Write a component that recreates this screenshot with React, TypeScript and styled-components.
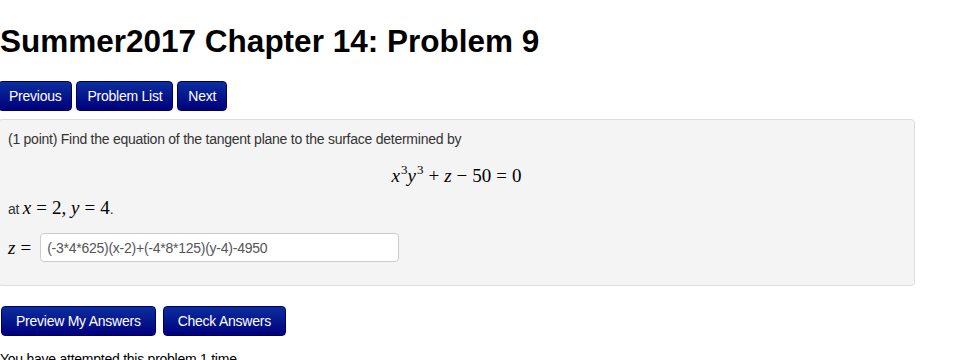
import styled, { createGlobalStyle } from 'styled-components';

const GlobalStyle = createGlobalStyle`
  html, body {
    margin: 0;
    padding: 0;
    background: #ffffff;
    overflow: hidden;
  }
  body {
    font-family: "Liberation Sans", Arial, sans-serif;
    font-size: 14px;
    letter-spacing: -0.25px;
    color: #333333;
  }
`;

const problemButtons = ['Previous', 'Problem List', 'Next'];
const submitButtons = ['Preview My Answers', 'Check Answers'];

function App() {
  return (
    <>
      <GlobalStyle />
      <Page>
        <Title>Summer2017 Chapter 14: Problem 9</Title>
        <ButtonRow>
          {problemButtons.map((label) => (
            <NavButton key={label}>{label}</NavButton>
          ))}
        </ButtonRow>
        <Panel>
          <Text>(1 point) Find the equation of the tangent plane to the surface determined by</Text>
          <DisplayMath>
            <Var>x</Var>
            <Sup>3</Sup>
            <Var>y</Var>
            <Sup>3</Sup>
            <Op>+</Op>
            <Var>z</Var>
            <Op>−</Op>
            50
            <Op>=</Op>
            0
          </DisplayMath>
          <Text>
            at{' '}
            <InlineMath>
              <Var>x</Var>
              <Op>=</Op>2, <Var>y</Var>
              <Op>=</Op>4
            </InlineMath>
            .
          </Text>
          <AnswerRow>
            <InlineMath>
              <Var>z</Var>
              <Op>=</Op>
            </InlineMath>
            <AnswerInput defaultValue="(-3*4*625)(x-2)+(-4*8*125)(y-4)-4950" />
          </AnswerRow>
        </Panel>
        <SubmitRow>
          {submitButtons.map((label) => (
            <SubmitButton key={label}>{label}</SubmitButton>
          ))}
        </SubmitRow>
        <Attempts>You have attempted this problem 1 time.</Attempts>
      </Page>
    </>
  );
}

const Page = styled.div`
  margin-left: -2px;
  display: flex;
  flex-direction: column;
  align-items: flex-start;
`;

const Title = styled.h1`
  margin: 25px 0 0 2px;
  font-size: 31.5px;
  line-height: 33px;
  font-weight: bold;
  letter-spacing: 0;
  color: #000000;
`;

const ButtonRow = styled.div`
  display: flex;
  gap: 4px;
  margin-top: 23px;
`;

const NavButton = styled.button`
  height: 30px;
  padding: 0 10px;
  border: 1px solid #00005c;
  border-radius: 4px;
  background: linear-gradient(to bottom, #0b2e9e, #00007c);
  color: #ffffff;
  font-family: "Liberation Sans", Arial, sans-serif;
  font-size: 14px;
  letter-spacing: -0.25px;
  cursor: pointer;
`;

const Panel = styled.div`
  box-sizing: border-box;
  width: 917px;
  margin-top: 8px;
  padding: 9px 9px 23px;
  background: #f4f4f4;
  border: 1px solid #dddddd;
  border-radius: 4px;
  display: flex;
  flex-direction: column;
`;

const Text = styled.div`
  line-height: 20px;
  color: #333333;
`;

const DisplayMath = styled.div`
  margin: 17px 0 12px;
  text-align: center;
  font-family: "Liberation Serif", "Times New Roman", serif;
  font-size: 19px;
  line-height: 20px;
  letter-spacing: 0;
  color: #000000;
`;

const InlineMath = styled.span`
  font-family: "Liberation Serif", "Times New Roman", serif;
  font-size: 19px;
  letter-spacing: 0;
  color: #000000;
`;

const Var = styled.span`
  font-style: italic;
`;

const Sup = styled.sup`
  font-size: 13px;
  vertical-align: 8px;
  line-height: 0;
  padding-left: 1px;
`;

const Op = styled.span`
  padding: 0 5px;
`;

const AnswerRow = styled.div`
  display: flex;
  align-items: center;
  gap: 4px;
  margin-top: 14px;
`;

const AnswerInput = styled.input`
  box-sizing: border-box;
  width: 359px;
  height: 29px;
  padding: 0 6px;
  border: 1px solid #cccccc;
  border-radius: 4px;
  background: #ffffff;
  color: #555555;
  font-family: "Liberation Sans", Arial, sans-serif;
  font-size: 14px;
  letter-spacing: -0.25px;
`;

const SubmitRow = styled.div`
  display: flex;
  gap: 7px;
  margin: 20px 0 0 3px;
`;

const SubmitButton = styled(NavButton)`
  padding: 0 14px;
`;

const Attempts = styled.div`
  margin: 13px 0 0 2px;
  line-height: 20px;
  color: #000000;
`;

export default App;
